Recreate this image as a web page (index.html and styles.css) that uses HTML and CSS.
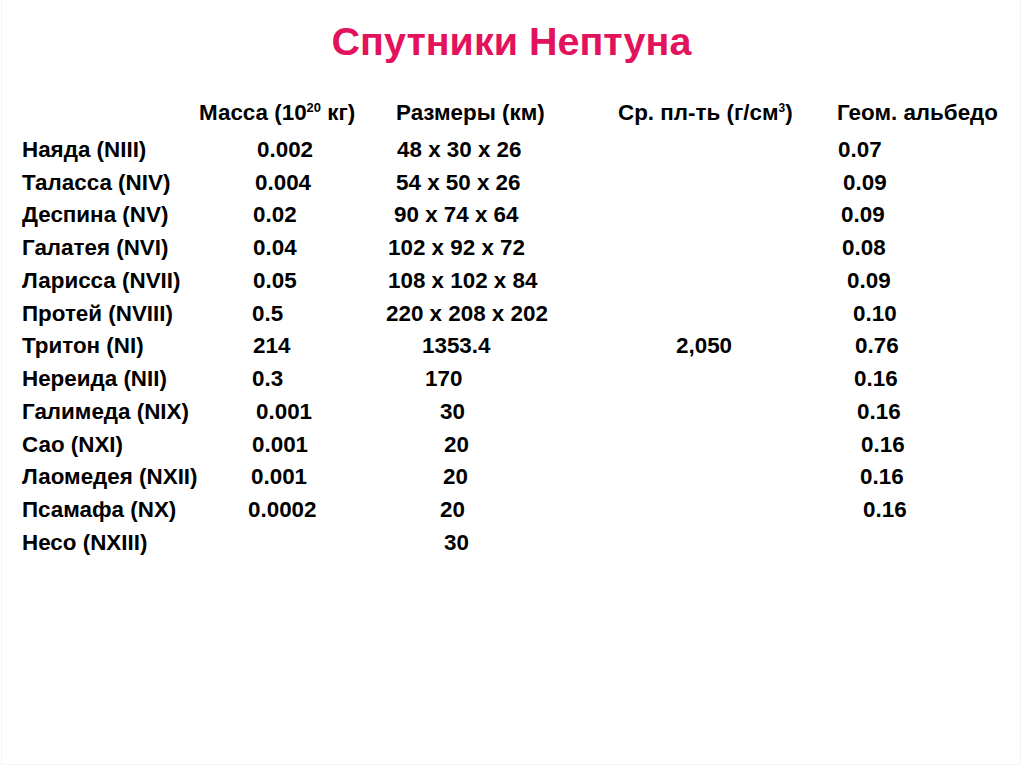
FILE: index.html
```html
<!DOCTYPE html>
<html lang="ru">
<head>
<meta charset="utf-8">
<title>Спутники Нептуна</title>
<link rel="stylesheet" href="styles.css">
</head>
<body>
<div class="slide">
  <h1 class="title">Спутники Нептуна</h1>
  <div class="table">
    <div class="head">
      <div></div>
      <div>Масса (10<sup>20</sup> кг)</div>
      <div>Размеры (км)</div>
      <div>Ср. пл-ть (г/см<sup class="s3">3</sup>)</div>
      <div>Геом. альбедо</div>
    </div>
    <div class="row"><div>Наяда (NIII)</div><div class="c" style="--dx:9px">0.002</div><div class="c" style="--dx:11px">48 x 30 x 26</div><div></div><div class="c" style="--dx:1px">0.07</div></div>
    <div class="row"><div>Таласса (NIV)</div><div class="c" style="--dx:7px">0.004</div><div class="c" style="--dx:10px">54 x 50 x 26</div><div></div><div class="c" style="--dx:6px">0.09</div></div>
    <div class="row"><div>Деспина (NV)</div><div class="c" style="--dx:5px">0.02</div><div class="c" style="--dx:8px">90 x 74 x 64</div><div></div><div class="c" style="--dx:4px">0.09</div></div>
    <div class="row"><div>Галатея (NVI)</div><div class="c" style="--dx:5px">0.04</div><div class="c" style="--dx:2px">102 x 92 x 72</div><div></div><div class="c" style="--dx:5px">0.08</div></div>
    <div class="row"><div>Ларисса (NVII)</div><div class="c" style="--dx:5px">0.05</div><div class="c" style="--dx:2px">108 x 102 x 84</div><div></div><div class="c" style="--dx:10px">0.09</div></div>
    <div class="row"><div>Протей (NVIII)</div><div class="c" style="--dx:4px">0.5</div><div class="c" style="--dx:0px">220 x 208 x 202</div><div></div><div class="c" style="--dx:16px">0.10</div></div>
    <div class="row"><div>Тритон (NI)</div><div class="c" style="--dx:5px">214</div><div class="c" style="--dx:36px">1353.4</div><div class="c" style="--dx:58px">2,050</div><div class="c" style="--dx:18px">0.76</div></div>
    <div class="row"><div>Нереида (NII)</div><div class="c" style="--dx:4px">0.3</div><div class="c" style="--dx:39px">170</div><div></div><div class="c" style="--dx:17px">0.16</div></div>
    <div class="row"><div>Галимеда (NIX)</div><div class="c" style="--dx:8px">0.001</div><div class="c" style="--dx:54px">30</div><div></div><div class="c" style="--dx:20px">0.16</div></div>
    <div class="row"><div>Сао (NXI)</div><div class="c" style="--dx:4px">0.001</div><div class="c" style="--dx:58px">20</div><div></div><div class="c" style="--dx:24px">0.16</div></div>
    <div class="row"><div>Лаомедея (NXII)</div><div class="c" style="--dx:3px">0.001</div><div class="c" style="--dx:57px">20</div><div></div><div class="c" style="--dx:23px">0.16</div></div>
    <div class="row"><div>Псамафа (NX)</div><div class="c" style="--dx:0px">0.0002</div><div class="c" style="--dx:54px">20</div><div></div><div class="c" style="--dx:26px">0.16</div></div>
    <div class="row"><div>Несо (NXIII)</div><div></div><div class="c" style="--dx:58px">30</div><div></div><div></div></div>
  </div>
</div>
</body>
</html>
```
FILE: styles.css
```css
html, body {
  margin: 0;
  padding: 0;
  background: #ffffff;
}
body {
  font-family: "Liberation Sans", Arial, sans-serif;
  color: #000;
}
.slide {
  width: 1020px;
  height: 765px;
  margin-left: 1px;
  border: 1px solid #f4f4f4;
  border-top: none;
  box-sizing: border-box;
  overflow: hidden;
}
.title {
  margin: 0;
  padding-top: 21px;
  height: 40px;
  line-height: 40px;
  font-size: 39.5px;
  font-weight: bold;
  text-align: center;
  color: #e2125c;
  margin-left: 1px;
}
.table {
  margin-top: 36px;
  font-size: 22.4px;
  font-weight: bold;
  line-height: 32.75px;
  white-space: nowrap;
}
.head {
  display: grid;
  grid-template-columns: 177px 197px 222px 219px auto;
  padding-left: 20px;
  margin-bottom: 4px;
  height: 32.75px;
}
.row {
  display: grid;
  grid-template-columns: 226px 138px 232px 219px auto;
  padding-left: 20px;
  height: 32.75px;
}
.c {
  padding-left: var(--dx, 0px);
}
sup {
  font-size: 13px;
  line-height: 0;
  vertical-align: 8px;
}
sup.s3 {
  font-size: 12px;
}
```
